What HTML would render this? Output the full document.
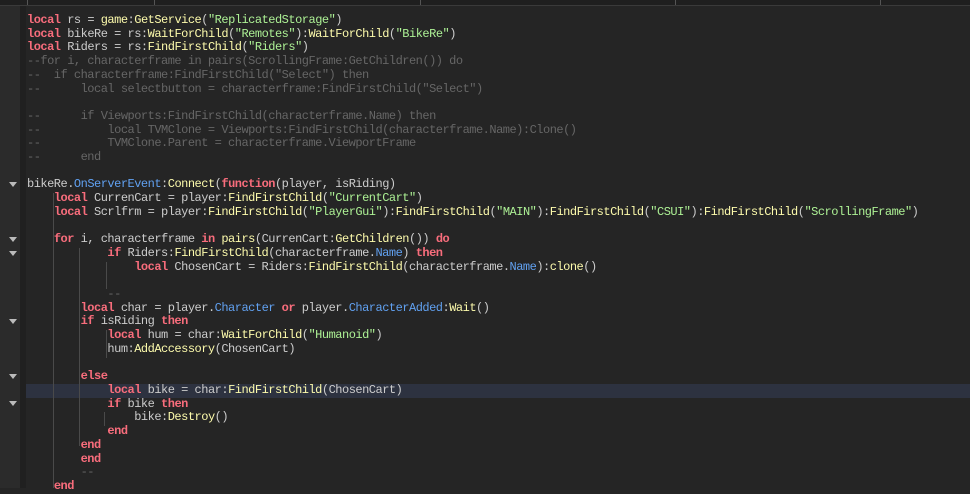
<!DOCTYPE html>
<html><head><meta charset="utf-8"><style>
html,body{margin:0;padding:0;width:970px;height:488px;overflow:hidden;background:#252525}
#top{position:absolute;left:0;top:0;width:970px;height:5px;background:#1f1f1f;border-bottom:1px solid #3a3a3a}
#top i{position:absolute;top:0;width:1px;height:5px;background:#555}
#gut{position:absolute;left:0;top:6px;width:20px;height:482px;background:#2b2b2b}
#gut2{position:absolute;left:20px;top:6px;width:6px;height:482px;background:#202020}
#hl{position:absolute;left:26px;top:384px;width:944px;height:14px;background:#2d3240}
.g{position:absolute;width:1px;background:#4a4a4a}
.arr{position:absolute;left:9px;width:0;height:0;border-left:4px solid transparent;border-right:4px solid transparent;border-top:5px solid #bbb}
#code{position:absolute;left:27px;top:14px;margin:0;font-family:"Liberation Mono","DejaVu Sans Mono",monospace;font-size:12px;letter-spacing:-0.5px;line-height:13.7px;color:#cccccc;white-space:pre}
.k{color:#f86d7c;font-weight:bold}
.f{color:#fdfbac}
.s{color:#adf195}
.p{color:#61a1f1}
.c{color:#666666}
</style></head><body>
<div id="top"><i style="left:27px"></i><i style="left:154px"></i><i style="left:420px"></i><i style="left:675px"></i><i style="left:880px"></i></div>
<div id="gut"></div><div id="gut2"></div>
<div id="hl"></div>
<div class="g" style="left:53px;top:193px;height:295px"></div>
<div class="g" style="left:79px;top:248px;height:198px"></div>
<div class="g" style="left:106px;top:262px;height:27px"></div>
<div class="g" style="left:106px;top:330px;height:28px"></div>
<div class="g" style="left:79px;top:385px;height:55px"></div>
<div class="g" style="left:104px;top:412px;height:14px"></div>
<div class="arr" style="top:182px"></div>
<div class="arr" style="top:237px"></div>
<div class="arr" style="top:251px"></div>
<div class="arr" style="top:319px"></div>
<div class="arr" style="top:374px"></div>
<div class="arr" style="top:401px"></div>
<pre id="code"><span class="k">local</span> rs = <span class="f">game</span>:<span class="f">GetService</span>(<span class="s">"ReplicatedStorage"</span>)
<span class="k">local</span> bikeRe = rs:<span class="f">WaitForChild</span>(<span class="s">"Remotes"</span>):<span class="f">WaitForChild</span>(<span class="s">"BikeRe"</span>)
<span class="k">local</span> Riders = rs:<span class="f">FindFirstChild</span>(<span class="s">"Riders"</span>)
<span class="c">--for i, characterframe in pairs(ScrollingFrame:GetChildren()) do</span>
<span class="c">--  if characterframe:FindFirstChild("Select") then</span>
<span class="c">--      local selectbutton = characterframe:FindFirstChild("Select")</span>

<span class="c">--      if Viewports:FindFirstChild(characterframe.Name) then</span>
<span class="c">--          local TVMClone = Viewports:FindFirstChild(characterframe.Name):Clone()</span>
<span class="c">--          TVMClone.Parent = characterframe.ViewportFrame</span>
<span class="c">--      end</span>

bikeRe.<span class="p">OnServerEvent</span>:<span class="f">Connect</span>(<span class="k">function</span>(player, isRiding)
    <span class="k">local</span> CurrenCart = player:<span class="f">FindFirstChild</span>(<span class="s">"CurrentCart"</span>)
    <span class="k">local</span> Scrlfrm = player:<span class="f">FindFirstChild</span>(<span class="s">"PlayerGui"</span>):<span class="f">FindFirstChild</span>(<span class="s">"MAIN"</span>):<span class="f">FindFirstChild</span>(<span class="s">"CSUI"</span>):<span class="f">FindFirstChild</span>(<span class="s">"ScrollingFrame"</span>)

    <span class="k">for</span> i, characterframe <span class="k">in</span> <span class="f">pairs</span>(CurrenCart:<span class="f">GetChildren</span>()) <span class="k">do</span>
            <span class="k">if</span> Riders:<span class="f">FindFirstChild</span>(characterframe.<span class="p">Name</span>) <span class="k">then</span>
                <span class="k">local</span> ChosenCart = Riders:<span class="f">FindFirstChild</span>(characterframe.<span class="p">Name</span>):<span class="f">clone</span>()

            <span class="c">--</span>
        <span class="k">local</span> char = player.<span class="p">Character</span> <span class="k">or</span> player.<span class="p">CharacterAdded</span>:<span class="f">Wait</span>()
        <span class="k">if</span> isRiding <span class="k">then</span>
            <span class="k">local</span> hum = char:<span class="f">WaitForChild</span>(<span class="s">"Humanoid"</span>)
            hum:<span class="f">AddAccessory</span>(ChosenCart)

        <span class="k">else</span>
            <span class="k">local</span> bike = char:<span class="f">FindFirstChild</span>(ChosenCart)
            <span class="k">if</span> bike <span class="k">then</span>
                bike:<span class="f">Destroy</span>()
            <span class="k">end</span>
        <span class="k">end</span>
        <span class="k">end</span>
        <span class="c">--</span>
    <span class="k">end</span></pre>
</body></html>
